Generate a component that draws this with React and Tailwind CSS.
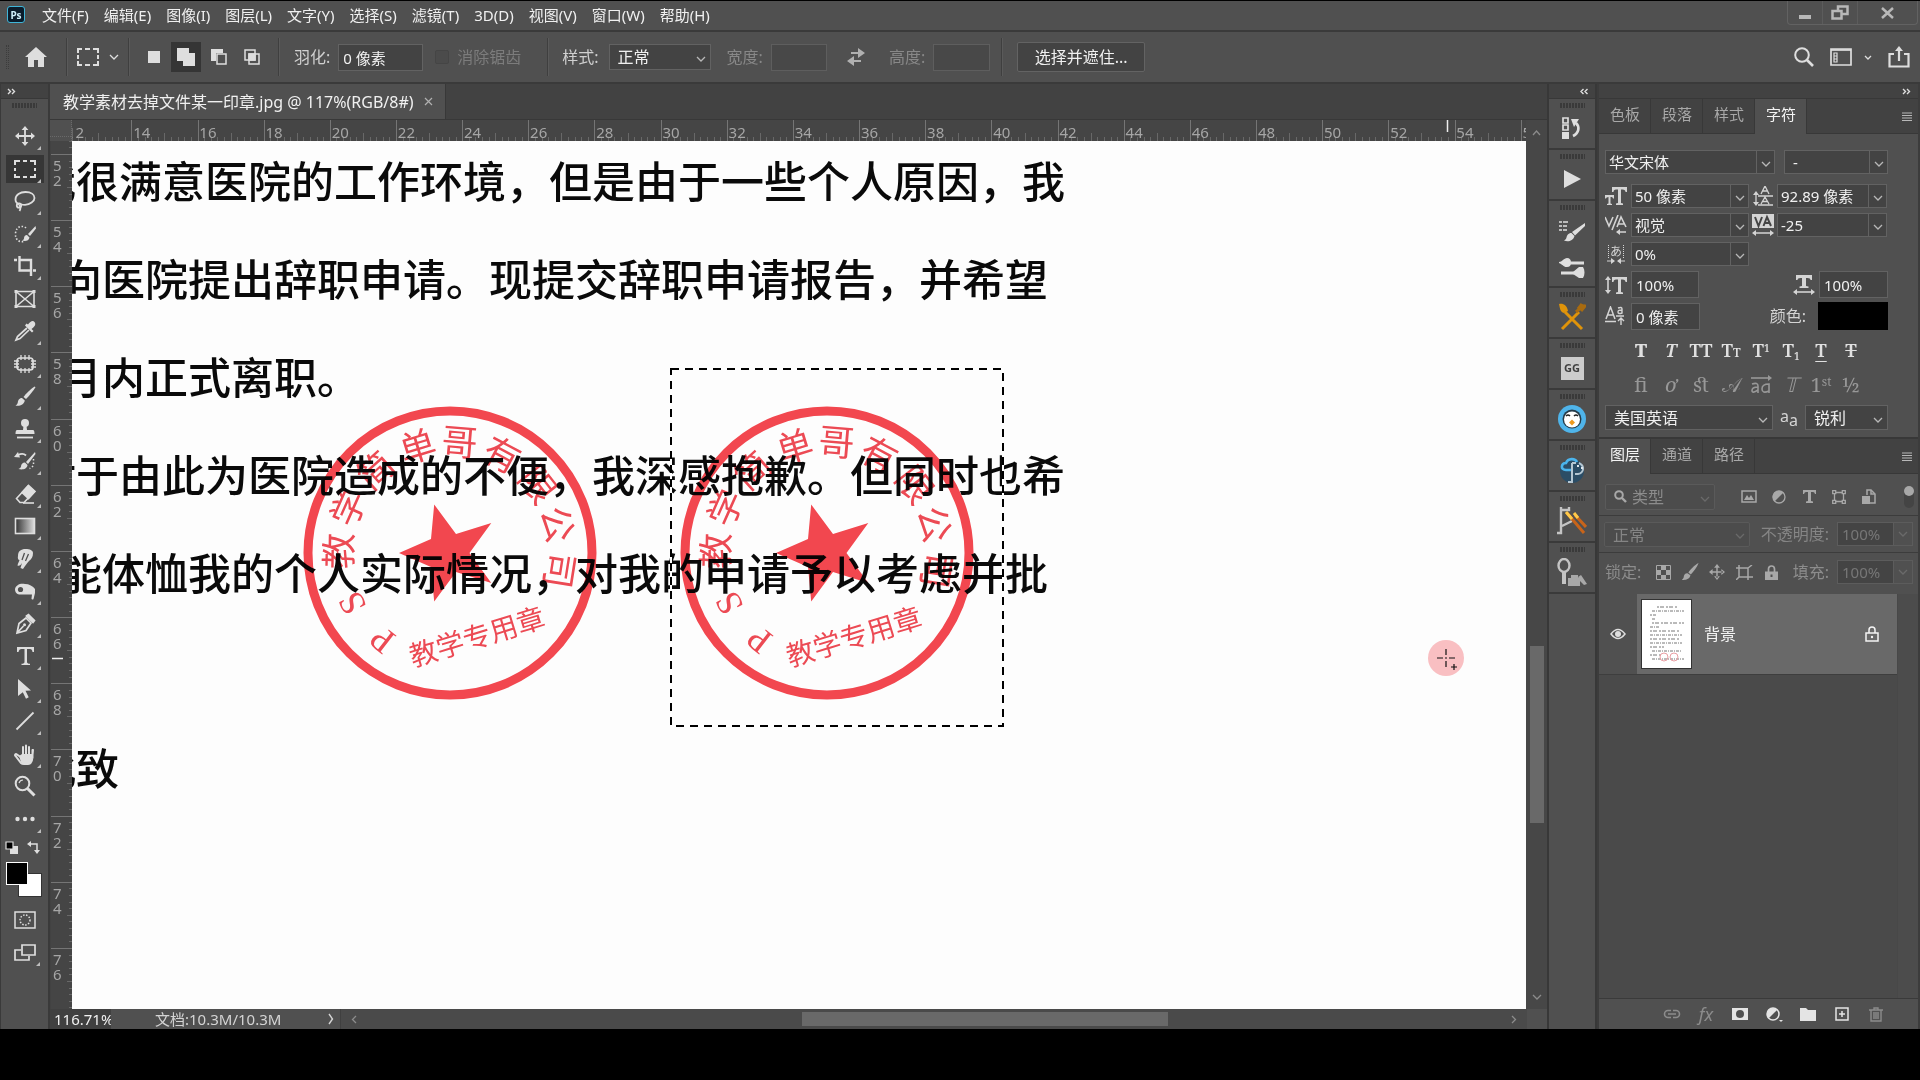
import React from "react";

const MENUS = ["文件(F)", "编辑(E)", "图像(I)", "图层(L)", "文字(Y)", "选择(S)", "滤镜(T)", "3D(D)", "视图(V)", "窗口(W)", "帮助(H)"];

function Svg({ w = 22, h = 22, children, className = "", ...rest }) {
  return (
    <svg width={w} height={h} viewBox={`0 0 ${w} ${h}`} fill="none" stroke="currentColor" strokeWidth="2" className={`shrink-0 ${className}`} aria-hidden="true" {...rest}>
      {children}
    </svg>
  );
}

const Chevron = ({ className = "" }) => (
  <Svg w={10} h={6} strokeWidth="1.3" className={className}>
    <path d="M1 1l4 4 4-4" />
  </Svg>
);

const Move = () => (
  <Svg strokeWidth="1.8">
    <path d="M11 3v16M3 11h16" />
    <path d="M11 1l3.4 4H7.600zM11 21l3.400-4H7.600zM1 11l4-3.400v6.800zM21 11l-4-3.400v6.800z" fill="currentColor" stroke="none" />
  </Svg>
);

const Brush = () => (
  <Svg>
    <path d="M20.500 1.500c-4 2.500-8.500 7-11 10.500l2.500 2c3.500-3.500 7.500-8.500 9.500-11.800z" fill="currentColor" stroke="none" />
    <path d="M8 13c-3 0-4 2.500-4.200 4.500C3.500 19 2.500 20 1.500 20.500c4 .8 8.500-.5 9.300-5z" fill="currentColor" stroke="none" />
  </Svg>
);

const TOOLS = [
  ["移动工具", <Move key="i" />],
  ["矩形选框工具", <Svg key="i" strokeWidth="2"><path d="M1 7V3h5M9 3h4M16 3h5v4M21 10v3M21 16v3h-5M13 19H9M6 19H1v-3M1 13v-3" /></Svg>],
  ["套索工具", <Svg key="i" strokeWidth="1.800"><path d="M5.500 14.500C2.500 13.500 1.500 11.500 1.500 9.500 1.500 5 6 2 11.500 2S20.500 4.500 20.500 8 16 14.500 11 14.800c-1.500 0-3-.1-4-.6" /><circle cx="5" cy="15.500" r="2.200" /><path d="M5 15c1.500 1.500 2 3.500.500 6" /></Svg>],
  ["快速选择工具", <Svg key="i"><path d="M12 5C9 2 2 3 1.500 10.500S7 20 11 18" strokeDasharray="1.500 1.800" strokeWidth="1.600" /><path d="M21.500 3L14 11l2 2 6-7.500zM13 12c-2 0-3 1.500-3 3.500-.5 1.500-1.500 1.800-2 2 3 1 7 .5 7.500-3z" fill="currentColor" stroke="none" /></Svg>],
  ["裁剪工具", <Svg key="i" strokeWidth="2.400"><path d="M0 5h3M5.500 1v14.500H17M5.500 5H17v16M19 15.500h3" /></Svg>],
  ["图框工具", <Svg key="i" strokeWidth="1.600"><path d="M2 3.500h18v15H2zM2 3.500l18 15M20 3.500l-18 15" /><path d="M.5 2h3v3h-3zM18.500 2h3v3h-3zM.5 17h3v3h-3zM18.500 17h3v3h-3z" fill="currentColor" stroke="none" /></Svg>],
  ["吸管工具", <Svg key="i"><path d="M13 8L3.500 16.500 2 20l4-1.500L15 10" strokeWidth="1.700" /><path d="M11 5.500l7 7 1.500-1.500-2-2c4-3 4.500-5 3-7s-4-1-6.500 2.500l-1.500-1z" fill="currentColor" stroke="none" /></Svg>],
  ["修复工具", <Svg key="i" strokeWidth="1.700"><rect x="3" y="5" width="16" height="12" rx="3" /><path d="M7 2v5M11 2v5M15 2v5M7 15v5M11 15v5M15 15v5M0 8h5M0 11h5M0 14h5M17 8h5M17 11h5M17 14h5" strokeWidth="1.300" /></Svg>],
  ["画笔工具", <Brush key="i" />],
  ["仿制图章工具", <Svg key="i"><circle cx="11" cy="5" r="4" fill="currentColor" stroke="none" /><path d="M9.500 8h3l.5 4h6q1.500 0 1.500 4h-19q0-4 1.500-4h6z" fill="currentColor" stroke="none" /><path d="M3 19.500h16" strokeWidth="1.800" /></Svg>],
  ["历史记录画笔", <Svg key="i"><path d="M21 2L12 12l2 2 7.500-10zM11 12.500c-2.500 0-4 2-4 4-.5 1.500-1.500 2-2.500 2.500 3.500 1 8.500.5 9-4z" fill="currentColor" stroke="none" /><path d="M0 7l4-5 2 5.500z" fill="currentColor" stroke="none" /><path d="M4 5c4-2 6-1.500 8 .5" strokeWidth="1.800" /><path d="M19.500 9v6c-1 2-2.500 3-4 3.500" strokeWidth="1.500" strokeDasharray="1.500 2" /></Svg>],
  ["橡皮擦工具", <Svg key="i" strokeWidth="1.600"><path d="M2.500 15.500L14 3l6.500 5.500L10 19.500H6z" /><path d="M8 9.500L14.500 2.500 21 8.500 14.500 15.500z" fill="currentColor" /><path d="M9 20h11" /></Svg>],
  ["渐变工具", <Svg key="i" strokeWidth="1.600"><defs><linearGradient id="toolGradient"><stop offset="0" stopColor="#333333" /><stop offset="1" stopColor="#dddddd" /></linearGradient></defs><rect x="1.500" y="3.500" width="19" height="15" fill="url(#toolGradient)" /></Svg>],
  ["涂抹工具", <Svg key="i"><path d="M4 8c0-5 3-7 7.500-7S19 2.500 19 5c0 4-1.500 6-4 8-2 2-4 5-6 8l-2.500-1L8 15c-1 2-3 3.500-4.500 2.500C4 15 5 13.500 5.500 12 4 12 3.500 10 4 8z" fill="currentColor" stroke="none" /><path d="M8 12l2.500-7M11.500 13l3-7" stroke="#505050" strokeWidth="1.300" /></Svg>],
  ["减淡工具", <Svg key="i"><path d="M1 9c1-4 5-6 10-5 4 0 8 2 10 5v4l-1.500 6c-.5 1-2 .5-2-.5l.5-4H8C3 15 1 12.500 1 9z" fill="currentColor" stroke="none" /><circle cx="6.500" cy="9.500" r="2.600" fill="#505050" stroke="none" /></Svg>],
  ["钢笔工具", <Svg key="i" strokeWidth="1.700"><path d="M3 20l2-9.500L12 5l5 5-5 7.500zM3 20l6.500-7" /><circle cx="10.500" cy="11.800" r="1.500" fill="currentColor" stroke="none" /><path d="M12.500 3l2-1.500 6 6-1.500 2z" fill="currentColor" /></Svg>],
  ["文字工具", <Svg key="i"><path d="M3 2h17v5h-1.500q-.3-3-2.500-3h-3v13q0 1.800 3 1.800V20H7.500v-1.200q3 0 3-1.800V4h-3Q5 4 4.500 7H3z" fill="currentColor" stroke="none" /></Svg>],
  ["路径选择工具", <Svg key="i"><path d="M4 1l13 11.500-5.500.3 3.200 6.500-2.700 1.400-3.200-6.500L4 18z" fill="currentColor" stroke="none" /></Svg>],
  ["直线工具", <Svg key="i" strokeWidth="1.800"><path d="M2.500 19.500L19.500 2.500" /></Svg>],
  ["抓手工具", <Svg key="i"><path d="M6.500 14L3 11.500c-1.500-1-2.500.5-1.500 1.500l5.500 7q1 1 3 1h4q3 0 4-4l1-10M9 14V4M12 13V2.500M15 13V4M18.500 7v8" strokeWidth="2" strokeLinecap="round" /><path d="M5 13l3-2h10v5q-1 5-4 5h-4q-2 0-3-2z" fill="currentColor" stroke="none" /></Svg>],
  ["缩放工具", <Svg key="i"><circle cx="8.500" cy="8.500" r="6.800" strokeWidth="2" /><path d="M13.500 13.500l7 7" strokeWidth="3" /><path d="M5 8q1-3 4-3" strokeWidth="1.200" /></Svg>],
  ["编辑工具栏", <Svg key="i"><circle cx="3.500" cy="11" r="2.200" fill="currentColor" stroke="none" /><circle cx="11" cy="11" r="2.200" fill="currentColor" stroke="none" /><circle cx="18.500" cy="11" r="2.200" fill="currentColor" stroke="none" /></Svg>],
];

const NO_FLYOUT = ["图框工具", "缩放工具"];

const Corner = () => (
  <svg width="4" height="4" viewBox="0 0 4 4" className="absolute right-[3px] bottom-0" aria-hidden="true">
    <path d="M4 0v4H0z" fill="#bdbdbd" />
  </svg>
);

function Toolbar() {
  return (
    <aside className="flex w-[50px] shrink-0 flex-col border-r-2 border-l border-[#3a3a3a] bg-[#505050] text-[#dedede]">
      <div className="flex h-[15px] items-center border-b border-[#383838] bg-[#424242] pl-[6px]">
        <Svg w={9} h={7} strokeWidth="1.400"><path d="M1 1l2.500 2.500L1 6M5 1l2.500 2.500L5 6" /></Svg>
      </div>
      <Grip />
      <div className="mx-auto mt-[14px] flex h-[711px] w-[38px] flex-col justify-between">
        {TOOLS.map(([name, icon]) => (
          <button key={name} type="button" aria-label={name} className={`relative flex h-[28px] items-center justify-center ${name === "矩形选框工具" ? "bg-[#363636]" : ""}`}>
            {icon}
            {!NO_FLYOUT.includes(name) && <Corner />}
          </button>
        ))}
      </div>
      <div className="mt-2 flex items-center justify-between pr-2 pl-1">
        <button type="button" aria-label="默认颜色">
          <Svg w={13} h={13} strokeWidth="1.200"><path d="M5 5h8v8H5z" fill="#dedede" stroke="none" /><path d="M1 1h7v7H1z" fill="#000000" /></Svg>
        </button>
        <button type="button" aria-label="切换颜色">
          <Svg w={13} h={13} strokeWidth="1.500"><path d="M3 3h7v7" /><path d="M0 3l4-3v6zM10 13L7 9h6z" fill="currentColor" stroke="none" /></Svg>
        </button>
      </div>
      <div className="mt-2 ml-[5px] grid h-[35px] w-[36px] grid-cols-[12px_10px_14px] grid-rows-[11px_12px_12px]">
        <button type="button" aria-label="背景色" className="col-span-2 col-start-2 row-span-2 row-start-2 border border-[#333333] bg-white" />
        <button type="button" aria-label="前景色" className="z-10 col-span-2 col-start-1 row-span-2 row-start-1 border border-white bg-black" />
      </div>
      <button type="button" aria-label="快速蒙版" className="mt-[14px] flex justify-center">
        <Svg w={22} h={18} strokeWidth="1.500"><path d="M1 1h20v16H1z" /><circle cx="11" cy="9" r="5" strokeDasharray="1.500 1.500" /></Svg>
      </button>
      <button type="button" aria-label="屏幕模式" className="relative mt-[15px] flex justify-center">
        <Svg w={22} h={18} strokeWidth="1.700"><path d="M8 1h13v10H8z" /><path d="M7 6H1v10h14v-4" /></Svg>
        <svg width="4" height="4" viewBox="0 0 4 4" className="absolute right-[8px] -bottom-1" aria-hidden="true"><path d="M4 0v4H0z" fill="#bdbdbd" /></svg>
      </button>
    </aside>
  );
}

function Grip() {
  return (
    <svg width="25" height="5" className="mx-auto mt-1 shrink-0 text-[#3a3a3a]" aria-hidden="true">
      <path d="M0 2.500h25" stroke="currentColor" strokeWidth="5" strokeDasharray="2 1" />
    </svg>
  );
}

const Sep = ({ className = "" }) => <div className={`h-[38px] w-[2px] shrink-0 border-r border-[#5a5a5a] bg-[#3f3f3f] ${className}`} />;

function OptionsBar() {
  return (
    <div className="flex h-[52px] shrink-0 items-center border-b-2 border-[#3a3a3a] bg-[#505050] text-[16px] text-[#d0d0d0]">
      <div className="ml-[6px] h-[24px] w-[3px] border-x border-dotted border-[#3c3c3c]" />
      <button type="button" aria-label="主页" className="ml-4 text-[#dedede]">
        <Svg w={22} h={20}><path d="M11 0l11 10h-3v10h-6v-7H9v7H3V10H0z" fill="currentColor" stroke="none" /></Svg>
      </button>
      <Sep className="ml-[19px]" />
      <button type="button" aria-label="工具预设" className="ml-[9px] flex items-center gap-[10px] text-[#dedede]">
        <Svg w={22} h={20} strokeWidth="2"><path d="M1 6V2h4M8 2h5M16 2h5v4M21 8v4M21 14v4h-5M13 18H8M5 18H1v-4M1 12V8" /></Svg>
        <Chevron />
      </button>
      <Sep className="ml-[9px]" />
      <div className="ml-[9px] flex items-center gap-[2px] text-[#dedede]">
        <button type="button" aria-label="新选区" className="flex h-[30px] w-[30px] items-center justify-center"><span className="h-[12px] w-[12px] bg-[#dedede]" /></button>
        <button type="button" aria-label="添加到选区" className="flex h-[30px] w-[30px] items-center justify-center bg-[#353535]">
          <Svg w={18} h={18}><path d="M0 0h12v5h6v13H6v-5H0z" fill="currentColor" stroke="none" /></Svg>
        </button>
        <button type="button" aria-label="从选区减去" className="flex h-[30px] w-[31px] items-center justify-center">
          <Svg w={16} h={16} strokeWidth="1.500"><path d="M0 0h12v4H5v8H0z" fill="currentColor" stroke="none" /><path d="M6 5h9v10H6z" /></Svg>
        </button>
        <button type="button" aria-label="与选区交叉" className="flex h-[30px] w-[31px] items-center justify-center">
          <Svg w={16} h={16} strokeWidth="1.500"><path d="M1 1h10v10H1zM5 5h10v10H5z" /><path d="M5 5h6v6H5z" fill="currentColor" /></Svg>
        </button>
      </div>
      <Sep className="ml-[11px]" />
      <label className="ml-[14px] flex items-center gap-2">
        羽化:
        <input defaultValue="0 像素" className="h-[27px] w-[85px] border border-[#626262] bg-[#434343] px-1 text-[15px] text-[#f0f0f0]" />
      </label>
      <label className="ml-3 flex items-center gap-2 text-[#7c7c7c]">
        <input type="checkbox" disabled className="h-[14px] w-[14px] appearance-none rounded-[2px] border border-[#454545] bg-[#4b4b4b]" />
        消除锯齿
      </label>
      <Sep className="ml-[26px]" />
      <label className="ml-[13px] flex items-center gap-[10px]">
        样式:
        <Select label="样式" value="正常" className="h-[26px] w-[102px]" selectClass="px-2 text-[16px] text-[#f0f0f0]" />
      </label>
      <label className="ml-4 flex items-center gap-2 text-[#888888]">
        宽度:
        <input disabled className="h-[27px] w-[56px] border border-[#5e5e5e] bg-[#484848]" />
      </label>
      <button type="button" aria-label="互换宽度和高度" className="ml-5 text-[#b0b0b0]">
        <Svg w={18} h={18} strokeWidth="1.800"><path d="M4 5h9M5 13h9" /><path d="M11 0l7 5-7 5zM7 8l-7 5 7 5z" fill="currentColor" stroke="none" /></Svg>
      </button>
      <label className="ml-[24px] flex items-center gap-2 text-[#888888]">
        高度:
        <input disabled className="h-[27px] w-[57px] border border-[#5e5e5e] bg-[#484848]" />
      </label>
      <Sep className="ml-[11px]" />
      <button type="button" className="ml-[14px] h-[30px] w-[128px] rounded-[2px] border border-[#636363] bg-[#434343] text-[16px] text-[#f0f0f0]">选择并遮住...</button>
      <div className="mr-[10px] ml-auto flex items-center text-[#dedede]">
        <button type="button" aria-label="搜索"><Svg w={20} h={20} strokeWidth="2"><circle cx="8" cy="8" r="6.800" /><path d="M13 13l6 6" strokeWidth="2.600" /></Svg></button>
        <button type="button" aria-label="工作区" className="ml-4 flex items-center gap-3">
          <Svg w={22} h={18} strokeWidth="1.700"><path d="M1 1h20v16H1z" /><path d="M1 2h20" /><path d="M4 5h3v9H4zM4 8h3M4 11h3" strokeWidth="1.200" /></Svg>
          <Svg w={8} h={5} strokeWidth="1.300"><path d="M1 1l3 3 3-3" /></Svg>
        </button>
        <button type="button" aria-label="共享" className="ml-4"><Svg w={22} h={22} strokeWidth="2.200"><path d="M6 8H1.500v12.500h19V8H16M11 15V3" /><path d="M11 0l4 5H7z" fill="currentColor" stroke="none" /></Svg></button>
      </div>
    </div>
  );
}

function Select({ label, value, className = "", selectClass = "", divider = false, tone = "border-[#626262] bg-[#434343]", dim = false }) {
  return (
    <span className={`relative flex shrink-0 border ${tone} ${className}`}>
      <select aria-label={label} defaultValue={value} disabled={dim} className={`h-full w-full appearance-none bg-transparent opacity-100 outline-none ${selectClass}`}>
        <option className="bg-[#434343]">{value}</option>
      </select>
      <span className={`pointer-events-none absolute inset-y-0 right-0 flex w-[18px] items-center justify-center pt-1 ${divider ? "border-l border-[#626262]" : ""} ${dim ? "text-[#6a6a6a]" : "text-[#b8b8b8]"}`}>
        <Chevron />
      </span>
    </span>
  );
}

const UNIT = 33.08;

function TopRuler() {
  const ticks = [];
  for (let i = 0; i <= 500; i++) {
    const x = Math.round(-6.8 + (i * UNIT) / 5) + 0.5;
    const y = i % 10 === 0 ? 0 : i % 5 === 0 ? 13 : 17;
    ticks.push(<path key={i} d={`M${x} ${y}V21`} stroke={i % 10 === 0 ? "#757575" : "#686868"} />);
  }
  return (
    <svg height="21" className="w-0 min-w-0 flex-1 bg-[#454545]" aria-label="水平标尺">
      {ticks}
      {Array.from({ length: 23 }, (_, i) => (
        <text key={i} x={-5 + i * 2 * UNIT} y="18" fontSize="15" fill="#a6a6a6">{12 + i * 2}</text>
      ))}
      <path d="M1375.500 0v12" stroke="#eeeeee" strokeWidth="1.500" />
    </svg>
  );
}

function SideRuler() {
  const ticks = [];
  for (let i = 0; i <= 300; i++) {
    const y = Math.round(13 + ((i - 5) * UNIT) / 5) + 0.5;
    const major = (i - 5) % 10 === 0;
    const x = major ? 0 : i % 5 === 0 ? 16 : 18;
    ticks.push(<path key={i} d={`M${x} ${y}H21`} stroke={major ? "#757575" : "#686868"} />);
  }
  return (
    <svg width="21" className="h-full shrink-0 bg-[#454545]" aria-label="垂直标尺">
      {ticks}
      {Array.from({ length: 13 }, (_, i) => {
        const n = String(52 + i * 2);
        const y = 13 + i * 2 * UNIT;
        return (
          <text key={n} fontSize="15" fill="#a6a6a6" y={y + 17}>
            <tspan x="2">{n[0]}</tspan>
            <tspan x="2" dy="15">{n[1]}</tspan>
          </text>
        );
      })}
      <path d="M1 517.500h11" stroke="#eeeeee" strokeWidth="1.500" />
    </svg>
  );
}

const RING = [["P", -142], ["S", -117], ["教", -89], ["学", -66], ["简", -42], ["单", -17], ["哥", 5], ["有", 28], ["限", 52], ["公", 75], ["司", 99]];

function Stamp({ className }) {
  return (
    <svg width="294" height="294" viewBox="-147 -147 294 294" className={`absolute mix-blend-multiply ${className}`} role="img" aria-label="教学专用章">
      <circle r="142" fill="none" stroke="#f4474f" strokeWidth="9" />
      <path d="M-51 0L-19 -14 -15.800 -48.500 6 -19 41.300 -30 19.500 0 41.300 30 6 19 -15.800 48.500 -19 14z" fill="#f4474f" />
      <g fill="#ee4a54" fontSize="36" textAnchor="middle">
        {RING.map(([c, a]) => (
          <text key={c} y="-98" transform={`rotate(${a})`} fontFamily="'Liberation Serif','Noto Sans CJK SC',serif">{c}</text>
        ))}
        <text fontSize="28" y="10" transform="translate(27 84) rotate(-17)" fontFamily="'Noto Sans CJK SC',sans-serif">教学专用章</text>
      </g>
    </svg>
  );
}

function Canvas() {
  return (
    <div className="relative min-w-0 flex-1 overflow-hidden bg-[#fdfdfd]">
      <div className="-mt-2 text-[43px] leading-[98px] font-medium whitespace-nowrap text-[#0a0a0a]">
        <p className="-ml-[39px]">我很满意医院的工作环境，但是由于一些个人原因，我</p>
        <p className="-ml-[13px]">向医院提出辞职申请。现提交辞职申请报告，并希望</p>
        <p className="-ml-[13px]">月内正式离职。</p>
        <p className="-ml-[39px]">对于由此为医院造成的不便，我深感抱歉。但同时也希</p>
        <p className="-ml-[13px]">能体恤我的个人实际情况，对我的申请予以考虑并批</p>
        <p className="mt-[97px] -ml-[39px]">此致</p>
      </div>
      <Stamp className="top-[265px] left-[231px]" />
      <Stamp className="top-[265px] left-[608px]" />
      <svg width="336" height="360" className="absolute top-[226px] left-[597px]" aria-label="选区">
        <rect x="2" y="2" width="332" height="357" fill="none" stroke="#ffffff" strokeWidth="2" />
        <rect x="2" y="2" width="332" height="357" fill="none" stroke="#000000" strokeWidth="2" strokeDasharray="8 6" />
      </svg>
      <svg width="38" height="38" viewBox="-19 -19 38 38" className="absolute top-[498px] left-[1355px]" aria-hidden="true">
        <circle r="18" fill="#f9bfc2" />
        <path d="M0 -9v6M0 3v6M-9 0h6M3 0h6M-1 0h2M8 6v6M5 9h6" stroke="#111111" strokeWidth="1.200" fill="none" />
      </svg>
    </div>
  );
}

function Document() {
  return (
    <main className="flex min-w-0 flex-1 flex-col bg-[#424242]">
      <div className="flex h-[36px] shrink-0 border-b border-[#383838]">
        <div className="flex items-center border-r border-[#383838] bg-[#505050] pr-3 pl-[13px] text-[16px] text-[#f0f0f0]">
          教学素材去掉文件某一印章.jpg @ 117%(RGB/8#)
          <button type="button" aria-label="关闭" className="ml-[10px] text-[#b0b0b0]"><Svg w={9} h={9} strokeWidth="1.200"><path d="M1 1l7 7M8 1L1 8" /></Svg></button>
        </div>
      </div>
      <div className="flex min-h-0 flex-1">
        <div className="flex min-w-0 flex-1 flex-col">
          <div className="flex h-[21px] shrink-0">
            <div className="z-10 flex w-[22px] shrink-0 items-end border-r border-dotted border-[#6a6a6a] bg-[#505050]"><div className="mb-1 w-full border-b border-dotted border-[#6a6a6a]" /></div>
            <TopRuler />
          </div>
          <div className="flex min-h-0 flex-1 pl-px">
            <SideRuler />
            <Canvas />
          </div>
        </div>
        <div className="flex w-[21px] shrink-0 flex-col items-center bg-[#474747] pt-[10px] pb-[9px] text-[#8c8c8c]">
          <Svg w={9} h={6} strokeWidth="1.300"><path d="M1 5l3.500-4L8 5" /></Svg>
          <div className="grid w-[14px] flex-1 grid-rows-[515fr_178fr_173fr]">
            <div className="row-start-2 bg-[#696969]" />
          </div>
          <Chevron />
        </div>
      </div>
      <div className="flex h-[20px] shrink-0 items-center bg-[#4a4a4a] text-[15px] leading-[20px]">
        <input aria-label="缩放" defaultValue="116.71%" className="h-full w-[61px] bg-[#404040] pl-1 text-[#f0f0f0]" />
        <div className="flex h-full w-[230px] items-center justify-between border-r border-[#404040] bg-[#505050] pr-[6px] pl-[44px] text-[#d4d4d4]">
          文档:10.3M/10.3M
          <Svg w={6} h={12} strokeWidth="1.400"><path d="M1 1l3.500 5L1 11" /></Svg>
        </div>
        <div className="flex h-full flex-1 items-center pr-[10px] pl-[10px] text-[#8c8c8c]">
          <Svg w={6} h={9} strokeWidth="1.300"><path d="M5 1L1.500 4.500 5 8" /></Svg>
          <div className="grid h-[14px] flex-1 grid-cols-[443fr_365fr_342fr]">
            <div className="col-start-2 bg-[#696969]" />
          </div>
          <Svg w={6} h={9} strokeWidth="1.300"><path d="M1 1l3.500 3.500L1 8" /></Svg>
        </div>
        <div className="h-full w-[20px] bg-[#505050]" />
      </div>
    </main>
  );
}

const DOCK = [
  [["历史记录", <Svg key="i" w={24} h={24} strokeWidth="1.700"><path d="M3 2h5v5H3zM3 9h5v5H3z" /><path d="M2 16h7v7H2z" fill="currentColor" stroke="none" /><path d="M13 20c6-3 7-9 3-13" strokeWidth="2.600" /><path d="M11 3h8l-5 8z" fill="currentColor" stroke="none" /></Svg>]],
  [["动作", <Svg key="i" w={18} h={18}><path d="M1 0l17 9-17 9z" fill="currentColor" stroke="none" /></Svg>]],
  [
    ["画笔设置", <Svg key="i" w={26} h={22}><path d="M0 2h3M0 6h3M0 10h3M4 2h5M4 6h4M4 10h4" strokeWidth="1.500" /><path d="M26 3L13 12l3 3.500L26 6zM12.500 13c-3.500 0-4.500 2.500-5 4.500-.5 2-1.500 2.500-2.500 3 3.500 1.500 9 1 10.500-4.500z" fill="currentColor" stroke="none" /></Svg>],
    ["画笔", <Svg key="i" w={26} h={20}><path d="M11 5h14M2 15h13" strokeWidth="3" /><path d="M0 4c3 0 5-4 8-4q4 0 4 4.500T8 9C5 9.500 3 6 0 5zM14 14l6-5h4c2 3 2 8 0 11h-4l-6-4z" fill="currentColor" stroke="none" /></Svg>],
  ],
  [["绘画工具", <Svg key="i" w={28} h={28} stroke="#e0940a"><path d="M7 9l17 17M21 9L4 26" strokeWidth="3" /><path d="M1 1c4-1 8 1 9 7l-4 2C2 9 2 5 1 1z" fill="#e0940a" stroke="none" /><path d="M20 6l4-5M23 8l5-6M18 9l8-7" strokeWidth="3" stroke="#a86b10" /></Svg>]],
  [["GG", <span key="i" className="flex h-[23px] w-[23px] items-center justify-center bg-[#cccccc] text-[11px] font-bold text-[#404040]">GG</span>]],
  [["企鹅插件", <Svg key="i" w={28} h={28}><circle cx="14" cy="14" r="14" fill="#4fb4ea" stroke="none" /><circle cx="14" cy="14" r="9.500" fill="#253b49" stroke="none" /><ellipse cx="14" cy="14.500" rx="8" ry="8" fill="#ffffff" stroke="none" /><path d="M8 11q2-2 4 0M16 11q2-2 4 0" stroke="#222222" strokeWidth="1.500" /><path d="M14 14.500l3 3-3 3-3-3z" fill="#ee9a1f" stroke="none" /></Svg>]],
  [["云插件", <Svg key="i" w={26} h={28}><circle cx="13" cy="15" r="12" fill="#2b4d66" stroke="none" /><path d="M12 14H7C1 14 2 7 7 7c2-5 9-5 11-1" stroke="#4bb4ec" strokeWidth="2.600" /><path d="M13 7v19H9M13 7h4M20 7c6 3 5 10-1 11h-3" stroke="#b4c6d2" strokeWidth="2" /><path d="M18 10h2M22 12h2" stroke="#e0e8ee" /></Svg>]],
  [["修饰插件", <Svg key="i" w={30} h={28}><path d="M4 0v26H0M4 3h8V0M5 19l10-5" stroke="#c4c4c4" strokeWidth="2.400" /><path d="M10 6l17 20M18 8l11 12" stroke="#c8641a" strokeWidth="3" /><path d="M9 5l6 7M17 6l4 5" stroke="#ffc94a" strokeWidth="3" /></Svg>]],
  [["磨皮插件", <Svg key="i" w={30} h={28} stroke="#c4c4c4"><ellipse cx="7" cy="7.500" rx="5.500" ry="6.500" strokeWidth="2.400" /><path d="M7 14v12" strokeWidth="4" /><path d="M11 20h12v8H11zM14 17h7v3h-7zM21 19l3-2 6 9-3 1-4-4z" fill="#a8a8a8" stroke="none" /></Svg>]],
];

function Dock() {
  return (
    <nav className="flex w-[50px] shrink-0 flex-col border-r-2 border-l-2 border-[#383838] bg-[#505050] text-[#dedede]">
      <div className="flex h-[15px] shrink-0 items-center justify-end border-b border-[#383838] bg-[#424242] pr-[6px]">
        <Svg w={9} h={7} strokeWidth="1.400"><path d="M3.500 1L1 3.500 3.500 6M7.500 1L5 3.500 7.500 6" /></Svg>
      </div>
      {DOCK.map((group) => (
        <div key={group[0][0]} className="flex flex-col border-b-2 border-[#3a3a3a]">
          <Grip />
          {group.map(([name, icon]) => (
            <button key={name} type="button" aria-label={name} className={`flex items-center justify-center ${group.length > 1 ? "h-[37px] first-of-type:mt-[2px]" : "h-[40px]"}`}>{icon}</button>
          ))}
        </div>
      ))}
    </nav>
  );
}

function PanelTabs({ tabs, active }) {
  return (
    <div role="tablist" className="flex h-[35px] shrink-0 bg-[#424242] text-[15px]">
      {tabs.map((t) => (
        <button key={t} type="button" role="tab" aria-selected={t === active} className={`w-[52px] border-r border-[#383838] pb-1 pl-px ${t === active ? "bg-[#505050] text-[#f4f4f4]" : "border-b text-[#a8a8a8]"}`}>{t}</button>
      ))}
      <div className="flex flex-1 items-center justify-end border-b border-[#383838] pr-[6px] text-[#b8b8b8]">
        <button type="button" aria-label="面板菜单"><Svg w={10} h={9} strokeWidth="1.200"><path d="M0 1h10M0 3.500h10M0 6h10M0 8.500h10" /></Svg></button>
      </div>
    </div>
  );
}

const FIELD = "px-[3px] text-[15px] text-[#f0f0f0]";

const IconCell = ({ children, className = "w-[26px]" }) => <span className={`flex shrink-0 items-center ${className}`}>{children}</span>;

function TextField({ label, value, className }) {
  return <input aria-label={label} defaultValue={value} className={`h-[27px] border border-[#626262] bg-[#434343] px-1 text-[15px] text-[#f0f0f0] ${className}`} />;
}

const SERIF = "font-['Noto_Serif','DejaVu_Serif',serif]";

const STYLES = [
  ["仿粗体", <span key="s" className="font-extrabold">T</span>],
  ["仿斜体", <span key="s" className="italic">T</span>],
  ["全部大写", <span key="s">TT</span>],
  ["小型大写", <span key="s">T<span className="text-[12px]">T</span></span>],
  ["上标", <span key="s">T<sup className="text-[10px]">1</sup></span>],
  ["下标", <span key="s">T<sub className="text-[10px]">1</sub></span>],
  ["下划线", <span key="s" className="underline underline-offset-4">T</span>],
  ["删除线", <span key="s" className="line-through">T</span>],
];

const OPENTYPE = [
  ["标准连字", "ﬁ"],
  ["上下文替代字", <span key="s" className="italic">ơ</span>],
  ["自由连字", "ﬆ"],
  ["花饰字", <span key="s">𝒜</span>],
  ["文体替代字", <Svg key="s" w={22} h={20} strokeWidth="1.600"><path d="M1 3h17" /><path d="M22 3l-4-3v6z" fill="currentColor" stroke="none" /><path d="M2 9q6-2 6 2v7M8 12q-6 0-6 3.500T8 15M19 18V9q-7 0-7 5t7 2" /></Svg>],
  ["标题替代字", <span key="s" className="italic">𝕋</span>],
  ["序数字", <span key="s">1<sup className="text-[12px]">st</sup></span>],
  ["分数字", "½"],
];

function CharacterPanel() {
  return (
    <section className="border-b-2 border-[#383838] pb-[7px]">
      <PanelTabs tabs={["色板", "段落", "样式", "字符"]} active="字符" />
      <div className="flex w-[289px] flex-col pt-4 pl-[6px] text-[#d4d4d4]">
        <div className="flex justify-between">
          <Select label="字体" value="华文宋体" divider className="h-[24px] w-[170px]" selectClass={FIELD} />
          <Select label="字体样式" value="-" divider className="h-[24px] w-[104px]" selectClass="px-2 text-[15px] text-[#f0f0f0]" />
        </div>
        <div className="mt-[10px] flex">
          <IconCell><Svg w={22} h={20}><path d="M7 1h15v5h-1.500q0-2.500-3-2.500H16V17l2 .5V19h-7v-1.500l2-.5V3.500h-2Q8.500 3.500 8.500 6H7zM0 9h9v3.500H8q0-1.500-1.500-1.500H5.500v6.500l1.500.5v1H2v-1l1.500-.5V11Q1 11 1 12.500H0z" fill="currentColor" stroke="none" /></Svg></IconCell>
          <Select label="字号" value="50 像素" divider className="h-[24px] w-[118px]" selectClass={FIELD} />
          <IconCell className="w-[28px] justify-center"><Svg w={20} h={20} strokeWidth="1.300"><path d="M5 10h15M5 19h15M3 8v9M8 8l4-8 4 8M9.500 5h5M8 18l4-7 4 7M9.500 15.500h5" /><path d="M0 9l3-4 3 4zM0 16l3 4 3-4z" fill="currentColor" stroke="none" /></Svg></IconCell>
          <Select label="行距" value="92.89 像素" divider className="h-[24px] w-[110px]" selectClass={FIELD} />
        </div>
        <div className="mt-[5px] flex">
          <IconCell><Svg w={22} h={20} strokeWidth="1.600"><path d="M0 2l4 9 4-9M13 0L7 15M12 12l4-10 5 10M13.500 9h6M12 17h9" /><path d="M11 17l4-3v6z" fill="currentColor" stroke="none" /></Svg></IconCell>
          <Select label="字距微调" value="视觉" divider className="h-[24px] w-[118px]" selectClass={FIELD} />
          <IconCell className="w-[28px] justify-center"><Svg w={22} h={22} strokeWidth="1.500"><path d="M0 0h22v14H0z" fill="currentColor" stroke="none" /><path d="M3 3l3.500 9L10 3M11.500 12L15 3l4 9M13 9h5" stroke="#444444" strokeWidth="2" /><path d="M3 19h16" /><path d="M0 19l4-3v6zM22 19l-4-3v6z" fill="currentColor" stroke="none" /></Svg></IconCell>
          <Select label="字距" value="-25" divider className="h-[24px] w-[110px]" selectClass={FIELD} />
        </div>
        <div className="mt-[5px] flex">
          <IconCell>
            <span className="flex w-[22px] flex-col items-center text-[12px] leading-[13px]"><span className="border-x border-dotted border-[#d4d4d4] px-px">あ</span><Svg w={18} h={6} strokeWidth="1.200"><path d="M0 3h7M11 3h7" /><path d="M4 0l4 3-4 3zM14 0l-4 3 4 3z" fill="currentColor" stroke="none" /></Svg></span>
          </IconCell>
          <Select label="比例间距" value="0%" divider className="h-[24px] w-[118px]" selectClass={FIELD} />
        </div>
        <div className="mt-[5px] flex items-center justify-between">
          <div className="flex"><IconCell><Svg w={22} h={20} strokeWidth="1.600"><path d="M3 3v14" /><path d="M0 5l3-4 3 4zM0 15l3 4 3-4z" fill="currentColor" stroke="none" /><path d="M7 2h15v5h-1.500q0-2.500-3-2.500H16V17l2 .5V19h-7v-1.500l2-.5V4.500h-2Q8.500 4.500 8.500 7H7z" fill="currentColor" stroke="none" /></Svg></IconCell><TextField label="垂直缩放" value="100%" className="w-[68px]" /></div>
          <div className="flex"><IconCell><Svg w={22} h={20} strokeWidth="1.600"><path d="M3 0h16v5h-1.500q0-2-3-2h-1.500v8l2.500.5V13h-9v-1.500l2.500-.5V3H7.500q-3 0-3 2H3z" fill="currentColor" stroke="none" /><path d="M3 17h16" /><path d="M0 17l4-3v6zM22 17l-4-3v6z" fill="currentColor" stroke="none" /></Svg></IconCell><TextField label="水平缩放" value="100%" className="w-[69px]" /></div>
        </div>
        <div className="mt-1 flex items-center justify-between">
          <div className="flex"><IconCell><Svg w={20} h={20} strokeWidth="1.500"><path d="M1 13L5.500 1 10 13M2.500 9h6M0 15.500h11" /><path d="M13 2q4-1.500 4 1v4q-4 1.500-4-1t4-1.500M11 10h8M16 12v7M13 15l3-3 3 3" strokeWidth="1.400" /></Svg></IconCell><TextField label="基线偏移" value="0 像素" className="w-[69px]" /></div>
          <label className="flex items-center gap-3 text-[16px] leading-[27px]">颜色:<button type="button" aria-label="文本颜色" className="h-[28px] w-[70px] bg-black" /></label>
        </div>
        <div className={`mt-[5px] ml-[21px] grid grid-cols-[repeat(8,30px)] text-[18px] leading-[30px] font-semibold text-[#e0e0e0] ${SERIF}`}>
          {STYLES.map(([name, s]) => <button key={name} type="button" aria-label={name} className="h-[30px] whitespace-nowrap">{s}</button>)}
        </div>
        <div className={`mt-[5px] ml-[21px] grid grid-cols-[repeat(8,30px)] text-[20px] leading-[30px] text-[#989898] ${SERIF}`}>
          {OPENTYPE.map(([name, s]) => <button key={name} type="button" aria-label={name} className="flex h-[30px] items-center justify-center whitespace-nowrap">{s}</button>)}
        </div>
        <div className="mt-[5px] flex items-center justify-between">
          <Select label="语言" value="美国英语" className="h-[25px] w-[168px]" selectClass="px-2 text-[16px] text-[#f0f0f0]" />
          <span className="flex text-[16px] leading-[18px]"><span>a</span><span className="pt-1">a</span></span>
          <Select label="消除锯齿方法" value="锐利" className="h-[25px] w-[83px]" selectClass="px-2 text-[16px] text-[#f0f0f0]" />
        </div>
      </div>
    </section>
  );
}

const FAINT = "border-[#5a5a5a] bg-[#4c4c4c]";

const THUMB = [[14, 30], [10, 34], [8, 8], [10, 6], [10, 34], [8, 12], [8, 32], [8, 34], [8, 32], [8, 34], [8, 16], [10, 32], [8, 14], [10, 34]];

function PercentField({ label }) {
  return (
    <div className="flex h-[24px] w-[76px] border border-[#5c5c5c]">
      <input aria-label={label} defaultValue="100%" disabled className="w-[56px] border-r border-[#5c5c5c] bg-[#444444] px-1 text-[15px] text-[#777777]" />
      <span className="flex flex-1 items-center justify-center text-[#6a6a6a]"><Chevron /></span>
    </div>
  );
}

function LayersPanel() {
  return (
    <section className="flex min-h-0 flex-1 flex-col">
      <PanelTabs tabs={["图层", "通道", "路径"]} active="图层" />
      <div className="flex h-[42px] shrink-0 items-center border-b border-[#3c3c3c] pt-1 pr-1 pl-[6px] text-[#a8a8a8]">
        <div className="relative flex items-center">
          <Svg w={13} h={13} strokeWidth="2" className="pointer-events-none absolute left-[9px] z-10"><circle cx="5" cy="5" r="3.800" /><path d="M8 8l4 4" strokeWidth="2.400" /></Svg>
          <Select label="类型" value="类型" dim tone={FAINT} className="h-[26px] w-[110px] rounded-[2px]" selectClass="pl-[26px] text-[16px] text-[#8c8c8c]" />
        </div>
        <div className="ml-[19px] grid grid-cols-[repeat(5,30px)] items-center justify-items-center">
          <button type="button" aria-label="像素图层"><Svg w={16} h={13} strokeWidth="1.500"><path d="M1 1h14v11H1z" /><path d="M3 10l3-5 2 3 2-3 3 5z" fill="currentColor" stroke="none" /></Svg></button>
          <button type="button" aria-label="调整图层"><Svg w={14} h={14} strokeWidth="1.300"><circle cx="7" cy="7" r="6" /><path d="M2.500 11.500a6 6 0 0 1 9-9z" fill="currentColor" stroke="none" /></Svg></button>
          <button type="button" aria-label="文字图层"><Svg w={13} h={13}><path d="M0 0h13v4h-1q-.5-2-2-2H8v9l2 .5V13H3v-1.500l2-.5V2H3Q1.500 2 1 4H0z" fill="currentColor" stroke="none" /></Svg></button>
          <button type="button" aria-label="形状图层"><Svg w={14} h={14} strokeWidth="1.300"><path d="M2.500 2.500h9v9h-9z" /><path d="M.7 .7h3v3h-3zM10.300 .7h3v3h-3zM.7 10.300h3v3h-3zM10.300 10.300h3v3h-3z" fill="#505050" /></Svg></button>
          <button type="button" aria-label="智能对象"><Svg w={14} h={15} strokeWidth="1.500"><path d="M5 6V1h4l4 4v9H8" /><path d="M9 1v4h4" /><path d="M0 7h8v8H0z" fill="currentColor" stroke="none" /></Svg></button>
        </div>
        <button type="button" aria-label="滤镜开关" className="ml-auto flex h-[22px] w-[10px] items-start rounded-full bg-[#444444]"><span className="block h-[10px] w-[10px] rounded-full bg-[#a8a8a8]" /></button>
      </div>
      <div className="flex h-[37px] shrink-0 items-center justify-between border-b border-[#3c3c3c] pr-[5px] pl-[5px] text-[16px] text-[#858585]">
        <Select label="混合模式" value="正常" dim tone={FAINT} className="h-[25px] w-[146px] rounded-[2px]" selectClass="px-2 text-[16px] text-[#858585]" />
        <label className="flex items-center gap-2">不透明度:<PercentField label="不透明度" /></label>
      </div>
      <div className="flex h-[41px] shrink-0 items-center justify-between pr-[5px] pb-[3px] pl-[6px] text-[16px] text-[#8c8c8c]">
        <span>锁定:</span>
        <div className="grid grid-cols-[repeat(5,27px)] items-center justify-items-center text-[#a8a8a8]">
          <button type="button" aria-label="锁定透明像素"><Svg w={15} h={15} strokeWidth="1"><path d="M.5 .5h14v14H.5z" /><path d="M5 1h5v4H5zM1 5h4v5H1zM10 5h4v5h-4zM5 10h5v4H5z" fill="currentColor" stroke="none" /></Svg></button>
          <button type="button" aria-label="锁定图像像素"><svg width="18" height="18" viewBox="0 0 22 22" fill="currentColor" aria-hidden="true"><path d="M21.500 0c-5 2.500-10 8-12.500 11.500l3 2.500c3.500-3.500 7.500-8.500 9.500-14zM8 12.500c-3.500 0-4.500 2.500-4.700 5C3 19 2 20 1 20.500c4.500.8 9.500-.5 10.500-5.500z" /></svg></button>
          <button type="button" aria-label="锁定位置"><svg width="16" height="16" viewBox="0 0 22 22" fill="currentColor" aria-hidden="true"><path d="M10 3h2v7h7v2h-7v7h-2v-7H3v-2h7zM11 0l4 5H7zM11 22l4-5H7zM0 11l5-4v8zM22 11l-5-4v8z" /></svg></button>
          <button type="button" aria-label="锁定画板"><Svg w={17} h={15} strokeWidth="1.500"><path d="M0 3h12v12M3 0v12h14M12 3l4-3M3 12l-3 3" /></Svg></button>
          <button type="button" aria-label="锁定全部"><Svg w={13} h={15} strokeWidth="1.700"><path d="M3.500 7V4a3 3 0 0 1 6 0v3" /><path fillRule="evenodd" d="M0 6.500h13V15H0zM5.500 9.500v2.500h2V9.500z" fill="currentColor" stroke="none" /></Svg></button>
        </div>
        <label className="flex items-center gap-2">填充:<PercentField label="填充" /></label>
      </div>
      <div className="flex min-h-0 flex-1 bg-[#4a4a4a]">
        <div className="min-w-0 flex-1">
          <div className="flex h-[81px] border-b border-[#3e3e3e]">
            <button type="button" aria-label="显示图层" className="flex w-[38px] items-center justify-center bg-[#505050] text-[#dedede]">
              <Svg w={16} h={12} strokeWidth="1.500"><path d="M1 6q7-9 14 0-7 9-14 0z" /><circle cx="8" cy="6" r="3" fill="currentColor" stroke="none" /></Svg>
            </button>
            <div className="flex flex-1 items-center bg-[#696969] pr-[18px] pl-1 text-[16px] text-[#f4f4f4]">
              <svg width="51" height="70" viewBox="0 0 51 70" className="mr-3 bg-white" role="img" aria-label="背景缩览图">
                <rect x=".5" y=".5" width="50" height="69" fill="none" stroke="#333333" />
                {THUMB.map(([x, w], i) => <path key={i} d={`M${i === 0 ? 16 : x + 1} ${8 + i * 4}h${i === 0 ? 20 : w - 2}`} stroke="#777777" strokeWidth="1" strokeDasharray={i % 2 ? "3 1 1 1" : "2 1 4 2"} />)}
                <circle cx="23" cy="58" r="4" fill="none" stroke="#e9a0a4" /><circle cx="33" cy="58" r="4" fill="none" stroke="#e9a0a4" />
              </svg>
              背景
              <Svg w={14} h={16} strokeWidth="1.500" className="ml-auto"><path d="M4 7V4a3 3 0 0 1 6 0v3M1 7h12v8H1z" /><circle cx="7" cy="11" r="1.200" fill="currentColor" stroke="none" /></Svg>
            </div>
          </div>
        </div>
        <div className="w-[21px] border-l border-[#484848] bg-[#4c4c4c]" />
      </div>
      <div className="flex h-[31px] shrink-0 items-center justify-end border-t border-[#3a3a3a] pr-[25px] text-[#e4e4e4]">
        <div className="grid grid-cols-[repeat(7,34px)] items-center justify-items-center">
          <button type="button" aria-label="链接图层" className="text-[#8c8c8c]"><Svg w={18} h={10} strokeWidth="1.600"><path d="M8 8.500H5a3.500 3.500 0 0 1 0-7h3M10 1.500h3a3.500 3.500 0 0 1 0 7h-3M5 5h8" /></Svg></button>
          <button type="button" aria-label="图层样式" className="text-[18px] leading-[20px] text-[#8c8c8c] italic">fx</button>
          <button type="button" aria-label="图层蒙版"><Svg w={16} h={12}><path fillRule="evenodd" d="M0 0h16v12H0zM8 2a4 4 0 1 0 0 8 4 4 0 0 0 0-8z" fill="currentColor" stroke="none" /></Svg></button>
          <button type="button" aria-label="新建调整图层"><Svg w={18} h={18} strokeWidth="1.500"><circle cx="8" cy="9" r="6" /><path d="M3.700 13.300a6 6 0 0 1 8.600-8.600z" fill="currentColor" stroke="none" /><path d="M14 15h4l-2 2z" fill="currentColor" stroke="none" /></Svg></button>
          <button type="button" aria-label="新建组"><Svg w={16} h={13}><path d="M0 0h6l2 2h8v11H0z" fill="currentColor" stroke="none" /></Svg></button>
          <button type="button" aria-label="新建图层"><Svg w={14} h={14} strokeWidth="1.500"><path d="M1 1h12v12H1zM7 4v6M4 7h6" /></Svg></button>
          <button type="button" aria-label="删除图层" className="text-[#8c8c8c]"><Svg w={14} h={15} strokeWidth="1.400"><path d="M0 3h14M5 3V1h4v2M2 3v11h10V3M5 5v7M7 5v7M9 5v7" /></Svg></button>
        </div>
      </div>
    </section>
  );
}

export default function App() {
  return (
    <div className="flex h-screen flex-col overflow-hidden bg-black pt-px pb-[51px] font-['Noto_Sans','Noto_Sans_CJK_SC',sans-serif]">
      <header className="flex h-[31px] shrink-0 items-start justify-between border-b-2 border-[#3a3a3a] bg-[#505050]">
        <div className="flex h-full items-center gap-px pb-[2px] pl-[7px] text-[15px] leading-[20px] text-[#f0f0f0]">
          <span className="mr-[9px] flex h-[17px] w-[18px] items-center justify-center rounded-[3px] border border-[#3fb5d8] bg-[#0b1c2b] text-[10px] leading-none font-bold text-[#cfeefa]">Ps</span>
          {MENUS.map((m) => <button key={m} type="button" className="px-[7px]">{m}</button>)}
        </div>
        <div className="mr-[2px] flex h-[24px] rounded-b border border-t-0 border-[#626262] text-[#b8b8b8]">
          <button type="button" aria-label="最小化" className="flex w-[35px] items-center justify-center border-r border-[#5c5c5c]"><Svg w={12} h={12}><path d="M0 10h12" strokeWidth="4" /></Svg></button>
          <button type="button" aria-label="还原" className="flex w-[35px] items-center justify-center border-r border-[#5c5c5c]"><Svg w={18} h={15} strokeWidth="2.500"><path d="M1.500 6h9v7.500h-9zM7 6V1.500h9.500V9H11" /></Svg></button>
          <button type="button" aria-label="关闭窗口" className="flex w-[59px] items-center justify-center"><Svg w={13} h={12}><path d="M1 1l11 10M12 1L1 11" strokeWidth="2.500" /></Svg></button>
        </div>
      </header>
      <OptionsBar />
      <div className="flex min-h-0 flex-1">
        <Toolbar />
        <Document />
        <Dock />
        <aside className="flex w-[323px] shrink-0 flex-col border-r-2 border-l-2 border-[#3c3c3c] bg-[#505050]">
          <div className="flex h-[15px] shrink-0 items-center justify-end border-b border-[#383838] bg-[#424242] pr-[7px] text-[#dedede]">
            <Svg w={9} h={7} strokeWidth="1.400"><path d="M1 1l2.500 2.500L1 6M5 1l2.500 2.500L5 6" /></Svg>
          </div>
          <CharacterPanel />
          <LayersPanel />
        </aside>
      </div>
    </div>
  );
}
